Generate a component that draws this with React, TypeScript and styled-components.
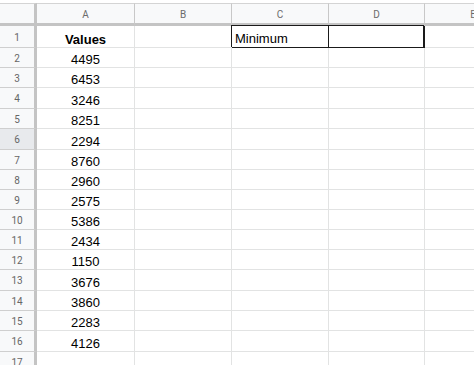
import styled, { createGlobalStyle } from "styled-components";

const GlobalStyle = createGlobalStyle`
  html, body {
    margin: 0;
    padding: 0;
    background: #ffffff;
    overflow: hidden;
  }
  body {
    font-family: Arial, "Liberation Sans", sans-serif;
  }
`;

const COLUMNS = ["A", "B", "C", "D", "E"];

const VALUES = [
  4495, 6453, 3246, 8251, 2294, 8760, 2960, 2575, 5386, 2434, 1150, 3676,
  3860, 2283, 4126,
];

// y position of each row's bottom grid line, measured from the sheet
const ROW_BOTTOMS = [
  47, 67, 87, 108, 128, 149, 169, 189, 209, 229, 249, 269, 290, 310, 330, 351,
  372,
];

const HOVER_ROW = 6;

const Sheet = styled.div`
  margin-top: 3px;
  width: 522px;
`;

const Row = styled.div<{ $h: number }>`
  display: grid;
  grid-template-columns: 37px 98px 97px 97px 96px 97px;
  height: ${(p) => p.$h}px;
`;

const Corner = styled.div`
  background: #f8f9fa;
  border-top: 1px solid #d4d4d4;
  border-right: 3px solid #c4c4c4;
  border-bottom: 3px solid #c4c4c4;
`;

const ColHeader = styled.div`
  display: flex;
  align-items: center;
  justify-content: center;
  background: #f8f9fa;
  border-top: 1px solid #d4d4d4;
  border-right: 1px solid #c8c8c8;
  border-bottom: 3px solid #c4c4c4;
  font-family: Roboto, Arial, sans-serif;
  font-size: 10px;
  color: #6b6b6b;
  padding-top: 1px;
`;

const RowHeader = styled.div<{ $hover?: boolean }>`
  display: flex;
  align-items: center;
  justify-content: center;
  background: ${(p) => (p.$hover ? "#e8eaed" : "#f8f9fa")};
  border-right: 3px solid #c4c4c4;
  border-bottom: 1px solid #cfcfcf;
  font-family: Roboto, Arial, sans-serif;
  font-size: 10px;
  color: #666666;
  padding-top: 1px;
`;

const Cell = styled.div<{ $align?: "left" | "center"; $bold?: boolean }>`
  display: flex;
  align-items: flex-end;
  justify-content: ${(p) => (p.$align === "center" ? "center" : "flex-start")};
  padding: 0 3px 0 3px;
  border-right: 1px solid #e2e3e3;
  border-bottom: 1px solid #e2e3e3;
  font-family: Arial, "Liberation Sans", sans-serif;
  font-size: 13px;
  line-height: 15px;
  font-weight: ${(p) => (p.$bold ? 700 : 400)};
  color: #000000;
  white-space: nowrap;
  overflow: hidden;
`;

// cells C1:D1 carry a black outline
const BoxedCell = styled(Cell)<{ $last?: boolean }>`
  border-right: ${(p) => (p.$last ? "2px" : "1px")} solid #1a1a1a;
  border-bottom: 1px solid #1a1a1a;
  box-shadow: -1px -1px 0 0 #1a1a1a;
  overflow: visible;
  padding-bottom: 1px;
`;

const App = () => {
  const rows = ROW_BOTTOMS.map((bottom, i) => {
    const prev = i === 0 ? 25 : ROW_BOTTOMS[i - 1];
    return { n: i + 1, h: bottom - prev };
  });

  return (
    <>
      <GlobalStyle />
      <Sheet>
        <Row $h={23}>
          <Corner />
          {COLUMNS.map((c) => (
            <ColHeader key={c}>{c}</ColHeader>
          ))}
        </Row>
        {rows.map(({ n, h }) => (
          <Row key={n} $h={h}>
            <RowHeader $hover={n === HOVER_ROW}>{n}</RowHeader>
            {n === 1 ? (
              <>
                <Cell $align="center" $bold>
                  Values
                </Cell>
                <Cell />
                <BoxedCell>Minimum</BoxedCell>
                <BoxedCell $last />
                <Cell />
              </>
            ) : (
              <>
                <Cell $align="center">{VALUES[n - 2] ?? ""}</Cell>
                <Cell />
                <Cell />
                <Cell />
                <Cell />
              </>
            )}
          </Row>
        ))}
      </Sheet>
    </>
  );
};

export default App;
